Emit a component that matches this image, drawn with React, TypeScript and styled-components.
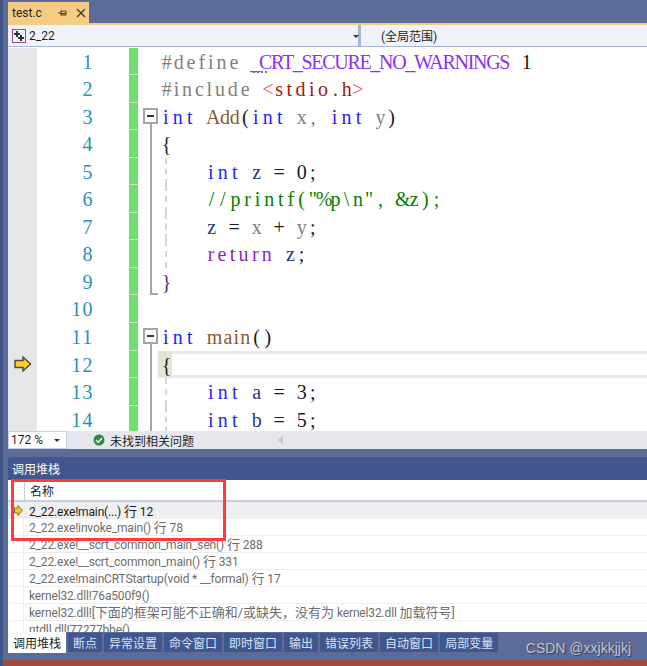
import styled, { createGlobalStyle } from "styled-components";

const Global = createGlobalStyle`
  html, body { margin: 0; padding: 0; }
  body { background: #5d6b99; }
`;

const UI_FONT = `Roboto, "Noto Sans CJK SC", sans-serif`;
const CODE_FONT = `"Liberation Serif"`;
const CODE_SIZE = 20;
const CELL = 11.25;

const C = {
  blue: "#1f1fff",
  fn: "#8a5a2b",
  param: "#808080",
  local: "#1f377f",
  text: "#1a1a1a",
  macro: "#8f2ff0",
  pre: "#808080",
  str: "#a31515",
  angle: "#e8605a",
  comment: "#008000",
  kw: "#8f1fc0",
  brace: "#5a2a7a",
};

const Page = styled.div`
  position: relative;
  width: 647px;
  height: 666px;
  box-sizing: border-box;
  overflow: hidden;
  display: flex;
  flex-direction: column;
  background: #5d6b99;
  border-left: 3px solid #3f5688;
  font-family: ${UI_FONT};
  font-size: 12px;
  color: #1e1e1e;
`;
const TabStrip = styled.div`
  height: 23px;
  padding: 2px 0 0 5px;
  box-sizing: border-box;
  display: flex;
  flex: none;
`;
const FileTab = styled.div`
  width: 81px;
  background: #f5cc84;
  display: flex;
  align-items: center;
  padding-left: 4px;
  box-sizing: border-box;
`;
const TabIcons = styled.div`
  margin-left: 15px;
  display: flex;
  align-items: center;
  gap: 9px;
`;
const DocFrame = styled.div`
  margin-left: 5px;
  border-top: 2px solid #f5cc84;
  height: 408px;
  box-sizing: border-box;
  flex: none;
  display: flex;
  flex-direction: column;
  background: #fff;
`;
const NavBar = styled.div`
  height: 22px;
  flex: none;
  box-sizing: border-box;
  display: flex;
  background: #f0f3fa;
  border-bottom: 1px solid #a9b5d3;
`;
const NavLeft = styled.div`
  width: 350px;
  display: flex;
  align-items: center;
  padding-left: 4px;
  box-sizing: border-box;
  gap: 3px;
  position: relative;
`;
const DropArrow = styled.span<{ $right: number }>`
  position: absolute;
  right: ${(p) => p.$right}px;
  top: 50%;
  margin-top: -1px;
  border-left: 3px solid transparent;
  border-right: 3px solid transparent;
  border-top: 3px solid #333;
`;
const NavRight = styled.div`
  flex: 1;
  border-left: 3px solid #a9b5d3;
  padding-left: 20px;
  display: flex;
  align-items: center;
`;
const Editor = styled.div`
  height: 384px;
  flex: none;
  overflow: hidden;
  padding-top: 0.5px;
  box-sizing: border-box;
`;
const Row = styled.div`
  display: flex;
  height: 27.55px;
  font-family: ${CODE_FONT}, serif;
  font-size: ${CODE_SIZE}px;
  line-height: 29px;
`;
const Glyph = styled.div`
  width: 29px;
  flex: none;
  background: #e6e7e8;
  display: flex;
  align-items: center;
  justify-content: center;
`;
const LineNo = styled.div`
  width: 56px;
  flex: none;
  display: flex;
  justify-content: flex-end;
  color: #2b91af;
`;
const Change = styled.div`
  width: 9px;
  margin-left: 36px;
  flex: none;
  background: #6fe06f;
  border-bottom: 1px solid #b8eeb8;
  box-sizing: border-box;
`;
const Fold = styled.div`
  width: 20px;
  margin-left: 4px;
  flex: none;
  position: relative;
`;
const FoldBox = styled.div`
  position: absolute;
  left: 1px;
  top: 5px;
  width: 15px;
  height: 16px;
  box-sizing: border-box;
  border: 2px solid #a5a5a5;
  background: #fff;
  &::after {
    content: "";
    position: absolute;
    left: 2px;
    right: 2px;
    top: 5px;
    height: 2px;
    background: #333;
  }
`;
const FoldLine = styled.div<{ $top?: number; $end?: boolean }>`
  position: absolute;
  left: 8px;
  top: ${(p) => p.$top ?? 0}px;
  bottom: 0;
  width: ${(p) => (p.$end ? 6 : 0)}px;
  border-left: 2px solid #a5a5a5;
  border-bottom: ${(p) => (p.$end ? "2px solid #a5a5a5" : "none")};
`;
const Code = styled.div<{ $current?: boolean }>`
  flex: 1;
  position: relative;
  white-space: pre;
  margin-left: -4px;
  padding-left: 3px;
  box-sizing: border-box;
  ${(p) =>
    p.$current &&
    `
    border: solid #e8e8f2;
    border-width: 3px 0;
    line-height: 23px;
    padding-left: 0;
  `}
`;
const Guide = styled.div`
  position: absolute;
  left: 7px;
  top: 0;
  bottom: 0;
  border-left: 2px dashed #d4d4d4;
`;
const BraceMark = styled.span`
  display: inline-block;
  vertical-align: top;
  height: 27.55px;
  margin-top: -3px;
  padding-left: 3px;
  line-height: 29px;
  background: #e3e6d6;
`;
const Squiggle = styled.span`
  position: absolute;
  left: 95px;
  top: 23px;
  width: 14px;
  border-bottom: 2px dotted #7a7a7a;
`;
const Run = styled.span<{ $c: string }>`
  display: inline-block;
  white-space: pre;
  color: ${(p) => p.$c};
`;
const StatusBar = styled.div`
  height: 18px;
  flex: none;
  margin-left: 5px;
  background: #e6e7ec;
  display: flex;
  align-items: center;
`;
const ZoomBox = styled.div`
  width: 59px;
  height: 18px;
  box-sizing: border-box;
  background: #fff;
  border: 1px solid #c6cfe2;
  padding-left: 2px;
  line-height: 16px;
  position: relative;
`;
const Health = styled.div`
  margin-left: 26px;
  display: flex;
  align-items: center;
  gap: 5px;
`;
const ScrollLeft = styled.span`
  margin-left: 84px;
  border-top: 5px solid transparent;
  border-bottom: 5px solid transparent;
  border-right: 5px solid #c8c8d0;
`;
const Spacer = styled.div`
  height: 8px;
  flex: none;
`;
const PanelTitle = styled.div`
  margin-left: 5px;
  height: 23px;
  flex: none;
  background: #40568d;
  color: #fff;
  display: flex;
  align-items: center;
  padding-left: 4px;
`;
const PanelBody = styled.div`
  margin-left: 5px;
  height: 152px;
  flex: none;
  background: #fff;
  overflow: hidden;
`;
const Header = styled.div`
  height: 22px;
  box-sizing: border-box;
  border-bottom: 2px solid #c6cfe2;
  padding-left: 22px;
  display: flex;
  align-items: center;
  position: relative;
  &::before {
    content: "";
    position: absolute;
    left: 16px;
    top: 0;
    bottom: 0;
    width: 1px;
    background: #c6cfe2;
  }
`;
const StackRow = styled.div<{ $active?: boolean }>`
  height: 17px;
  box-sizing: border-box;
  display: flex;
  align-items: center;
  line-height: 16px;
  color: ${(p) => (p.$active ? "#1e1e1e" : "#6d6d6d")};
  background: ${(p) => (p.$active ? "#eeeeee" : "#fff")};
  border-bottom: ${(p) => (p.$active ? "none" : "1px solid #eeeeee")};
`;
const Marker = styled.div`
  width: 16px;
  height: 100%;
  flex: none;
  box-sizing: border-box;
  border-right: 1px solid #eeeeee;
  display: flex;
  align-items: center;
  justify-content: flex-end;
`;
const StackText = styled.span`
  padding: 2px 0 0 5px;
  white-space: pre;
  letter-spacing: -0.15px;
`;
const Wide = styled.span`
  font-size: 13px;
  letter-spacing: 0;
`;
const BottomTabs = styled.div`
  height: 28px;
  flex: none;
  margin-left: 5px;
  display: flex;
  align-items: flex-start;
  gap: 2px;
`;
const BottomTab = styled.div<{ $active?: boolean }>`
  height: ${(p) => (p.$active ? 21 : 19)}px;
  margin-top: ${(p) => (p.$active ? 0 : 1)}px;
  padding: 0 5px;
  display: flex;
  align-items: center;
  background: ${(p) => (p.$active ? "#fff" : "#40568d")};
  color: ${(p) => (p.$active ? "#1e1e1e" : "#d6e4fa")};
`;
const Footer = styled.div`
  flex: 1;
  background: #9e4b3f;
`;
const Watermark = styled.div`
  position: absolute;
  right: 16px;
  top: 639px;
  color: #c4c6d2;
  font-family: "Liberation Sans", sans-serif;
  font-size: 14px;
  line-height: 18px;
  text-shadow: 1px 1px 1px #33384f;
`;
const RedBox = styled.div`
  position: absolute;
  left: 8px;
  top: 479px;
  width: 215px;
  height: 62px;
  box-sizing: border-box;
  border: 3px solid #ff3b3b;
`;

function Pin() {
  return (
    <svg width="10" height="10" viewBox="0 0 10 10">
      <path d="M1 5h3M4 2.5v5M4 3h5v4H4M4 5.5h5" fill="none" stroke="#4a3a1a" strokeWidth="1" />
    </svg>
  );
}

function Close() {
  return (
    <svg width="10" height="10" viewBox="0 0 10 10">
      <path d="M1 1l8 8M9 1l-8 8" fill="none" stroke="#4a3a1a" strokeWidth="1.4" />
    </svg>
  );
}

function ProjectIcon() {
  return (
    <svg width="14" height="14" viewBox="0 0 14 14">
      <rect x="0.5" y="0.5" width="13" height="13" fill="#f0f3fa" stroke="#8a4a9a" />
      <path d="M5 2v6M2 5h6M9 6v6M6 9h6" stroke="#333" strokeWidth="2" />
    </svg>
  );
}

function NextArrow() {
  return (
    <svg width="18" height="16" viewBox="0 0 18 16">
      <path d="M1 4.5h8V1l7.5 7L9 15v-3.5H1z" fill="#ffcc22" stroke="#4a4a4a" strokeWidth="1.4" />
    </svg>
  );
}

function SmallArrow() {
  return (
    <svg width="9" height="11" viewBox="0 0 9 11">
      <path d="M0.5 3h3.5V0.5L8.5 5.5 4 10.5V8H0.5z" fill="#f5c518" stroke="#6a5a20" strokeWidth="0.8" />
    </svg>
  );
}

function Check() {
  return (
    <svg width="12" height="12" viewBox="0 0 12 12">
      <circle cx="6" cy="6" r="5.5" fill="#2e8b3d" />
      <path d="M3 6l2.2 2.2L9 4.2" fill="none" stroke="#fff" strokeWidth="1.5" />
    </svg>
  );
}

// no serif monospace is installed, so each run is spaced out to the editor's cell width
const measure = document.createElement("canvas").getContext("2d")!;

function Mono({ text, color }: { text: string; color: string }) {
  const runs = text.match(/[A-Za-z0-9_]+|\s+|[^\sA-Za-z0-9_]/g) ?? [];
  measure.font = `${CODE_SIZE}px ${CODE_FONT}`;
  return (
    <>
      {runs.map((run, i) => {
        const extra = (run.length * CELL - measure.measureText(run).width) / run.length;
        return (
          <Run
            key={i}
            $c={color}
            style={{ width: run.length * CELL, letterSpacing: extra, textIndent: extra / 2 }}
          >
            {run}
          </Run>
        );
      })}
    </>
  );
}

type Seg = [string, string];
const t = (s: string, c: string): Seg => [s, c];

const lines: { segs: Seg[]; fold?: "box" | "line" | "end"; guide?: boolean }[] = [
  { segs: [t("#define ", C.pre), t("_CRT_SECURE_NO_WARNINGS", C.macro), t(" 1", C.text)] },
  { segs: [t("#include ", C.pre), t("<", C.angle), t("stdio.h", C.str), t(">", C.angle)] },
  {
    fold: "box",
    segs: [
      t("int", C.blue),
      t(" ", C.text),
      t("Add", C.fn),
      t("(", C.text),
      t("int", C.blue),
      t(" x, ", C.param),
      t("int", C.blue),
      t(" y", C.param),
      t(")", C.text),
    ],
  },
  { fold: "line", segs: [t("{", C.text)] },
  {
    fold: "line",
    guide: true,
    segs: [t("    ", C.text), t("int", C.blue), t(" ", C.text), t("z", C.local), t(" = 0;", C.text)],
  },
  {
    fold: "line",
    guide: true,
    segs: [t("    //printf(\"%p\\n\", &z);", C.comment)],
  },
  {
    fold: "line",
    guide: true,
    segs: [
      t("    ", C.text),
      t("z", C.local),
      t(" = ", C.text),
      t("x", C.param),
      t(" + ", C.text),
      t("y", C.param),
      t(";", C.text),
    ],
  },
  {
    fold: "line",
    guide: true,
    segs: [t("    ", C.text), t("return", C.kw), t(" ", C.text), t("z", C.local), t(";", C.text)],
  },
  { fold: "end", segs: [t("}", C.brace)] },
  { segs: [] },
  {
    fold: "box",
    segs: [t("int", C.blue), t(" ", C.text), t("main", C.fn), t("()", C.text)],
  },
  { fold: "line", segs: [] },
  {
    fold: "line",
    guide: true,
    segs: [t("    ", C.text), t("int", C.blue), t(" ", C.text), t("a", C.local), t(" = 3;", C.text)],
  },
  {
    fold: "line",
    guide: true,
    segs: [t("    ", C.text), t("int", C.blue), t(" ", C.text), t("b", C.local), t(" = 5;", C.text)],
  },
];

const frames = [
  <>2_22.exe!main(...) <Wide>行</Wide> 12</>,
  <>2_22.exe!invoke_main() <Wide>行</Wide> 78</>,
  <>2_22.exe!__scrt_common_main_seh() <Wide>行</Wide> 288</>,
  <>2_22.exe!__scrt_common_main() <Wide>行</Wide> 331</>,
  <>2_22.exe!mainCRTStartup(void * __formal) <Wide>行</Wide> 17</>,
  <>kernel32.dll!76a500f9()</>,
  <>kernel32.dll![<Wide>下面的框架可能不正确和/或缺失，没有为</Wide> kernel32.dll <Wide>加载符号</Wide>]</>,
  <>ntdll.dll!77277bbe()</>,
];

const tabs = ["调用堆栈", "断点", "异常设置", "命令窗口", "即时窗口", "输出", "错误列表", "自动窗口", "局部变量"];

export default function App() {
  return (
    <Page>
      <Global />
      <TabStrip>
        <FileTab>
          test.c
          <TabIcons>
            <Pin />
            <Close />
          </TabIcons>
        </FileTab>
      </TabStrip>
      <DocFrame>
        <NavBar>
          <NavLeft>
            <ProjectIcon />
            2_22
            <DropArrow $right={-1} />
          </NavLeft>
          <NavRight>(全局范围)</NavRight>
        </NavBar>
        <Editor>
          {lines.map((line, i) => (
            <Row key={i}>
              <Glyph>{i === 11 && <NextArrow />}</Glyph>
              <LineNo>
                <Mono text={String(i + 1)} color="#2b91af" />
              </LineNo>
              <Change />
              <Fold>
                {line.fold === "box" && <FoldLine $top={20} />}
                {line.fold === "box" && <FoldBox />}
                {line.fold === "line" && <FoldLine />}
                {line.fold === "end" && <FoldLine $end />}
              </Fold>
              <Code $current={i === 11}>
                {line.guide && <Guide />}
                {i === 0 && <Squiggle />}
                {i === 11 && (
                  <BraceMark>
                    <Mono text="{" color={C.text} />
                  </BraceMark>
                )}
                {line.segs.map(([s, c], j) => (
                  <Mono key={j} text={s} color={c} />
                ))}
              </Code>
            </Row>
          ))}
        </Editor>
      </DocFrame>
      <StatusBar>
        <ZoomBox>
          172 %
          <DropArrow $right={6} />
        </ZoomBox>
        <Health>
          <Check />
          未找到相关问题
        </Health>
        <ScrollLeft />
      </StatusBar>
      <Spacer />
      <PanelTitle>调用堆栈</PanelTitle>
      <PanelBody>
        <Header>名称</Header>
        {frames.map((f, i) => (
          <StackRow key={i} $active={i === 0}>
            <Marker>{i === 0 && <SmallArrow />}</Marker>
            <StackText>{f}</StackText>
          </StackRow>
        ))}
      </PanelBody>
      <BottomTabs>
        {tabs.map((name, i) => (
          <BottomTab key={name} $active={i === 0}>
            {name}
          </BottomTab>
        ))}
      </BottomTabs>
      <Footer />
      <RedBox />
      <Watermark>CSDN @xxjkkjjkj</Watermark>
    </Page>
  );
}
